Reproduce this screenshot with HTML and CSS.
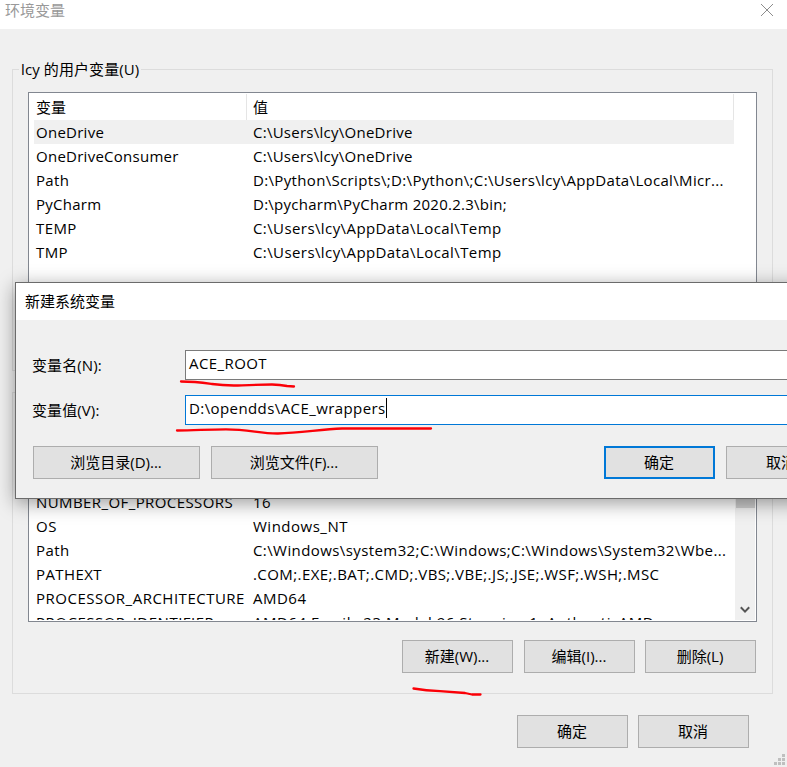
FILE: index.html
```
<!DOCTYPE html>
<html lang="zh-CN">
<head>
<meta charset="utf-8">
<title>环境变量</title>
<link rel="stylesheet" href="styles.css">
</head>
<body>
<main class="window">
  <header class="titlebar">
    <span class="titlebar-text">环境变量</span>
    <svg class="close" width="14" height="14" viewBox="0 0 14 14"><path d="M1 1L13 13M13 1L1 13" fill="none" stroke="#8c8c8c" stroke-width="1"/></svg>
  </header>

  <section class="group group-user">
    <h2 class="legend">lcy 的用户变量(U)</h2>
    <div class="list list-user">
      <div class="row head"><span class="name">变量</span><span class="value">值</span></div>
      <div class="row selected t2"><span class="name">OneDrive</span><span class="value">C:\Users\lcy\OneDrive</span></div>
      <div class="row t2"><span class="name">OneDriveConsumer</span><span class="value">C:\Users\lcy\OneDrive</span></div>
      <div class="row t3"><span class="name">Path</span><span class="value">D:\Python\Scripts\;D:\Python\;C:\Users\lcy\AppData\Local\Micr...</span></div>
      <div class="row t2"><span class="name">PyCharm</span><span class="value">D:\pycharm\PyCharm 2020.2.3\bin;</span></div>
      <div class="row t4"><span class="name">TEMP</span><span class="value">C:\Users\lcy\AppData\Local\Temp</span></div>
      <div class="row t4"><span class="name">TMP</span><span class="value">C:\Users\lcy\AppData\Local\Temp</span></div>
    </div>
  </section>

  <section class="group group-system">
    <div class="list list-system">
      <div class="rows">
        <div class="row t4"><span class="name">NUMBER_OF_PROCESSORS</span><span class="value">16</span></div>
        <div class="row t5"><span class="name">OS</span><span class="value">Windows_NT</span></div>
        <div class="row t4"><span class="name">Path</span><span class="value">C:\Windows\system32;C:\Windows;C:\Windows\System32\Wbe...</span></div>
        <div class="row t4"><span class="name">PATHEXT</span><span class="value">.COM;.EXE;.BAT;.CMD;.VBS;.VBE;.JS;.JSE;.WSF;.WSH;.MSC</span></div>
        <div class="row t5"><span class="name">PROCESSOR_ARCHITECTURE</span><span class="value">AMD64</span></div>
        <div class="row t5"><span class="name">PROCESSOR_IDENTIFIER</span><span class="value">AMD64 Family 23 Model 96 Stepping 1, AuthenticAMD</span></div>
      </div>
      <div class="scrollbar">
        <div class="thumb"></div>
        <svg class="chevron" width="10" height="8" viewBox="0 0 10 8"><path d="M0.8 1.2L5 5.6L9.2 1.2" fill="none" stroke="#555" stroke-width="2"/></svg>
      </div>
    </div>
    <div class="actions">
      <button class="btn">新建(W)...</button>
      <button class="btn">编辑(I)...</button>
      <button class="btn">删除(L)</button>
    </div>
  </section>

  <footer class="footer">
    <button class="btn">确定</button>
    <button class="btn">取消</button>
  </footer>
  <svg class="grip" width="12" height="12" viewBox="0 0 12 12" fill="#bfbfbf"><path d="M8 0h3v3h-3zM4 4h3v3h-3zM8 4h3v3h-3zM0 8h3v3h-3zM4 8h3v3h-3zM8 8h3v3h-3z"/></svg>

  <section class="dialog">
    <header class="dialog-title">新建系统变量</header>
    <div class="form">
      <label class="field"><span class="label">变量名(N):</span><span class="input">ACE_ROOT</span></label>
      <label class="field"><span class="label">变量值(V):</span><span class="input focused">D:\opendds\ACE_wrappers<i class="caret"></i></span></label>
      <div class="dialog-actions">
        <button class="btn wide">浏览目录(D)...</button>
        <button class="btn wide">浏览文件(F)...</button>
        <button class="btn primary">确定</button>
        <button class="btn">取消</button>
      </div>
    </div>
  </section>

  <svg class="marks" width="787" height="767" viewBox="0 0 787 767" fill="none" stroke="#fb0007" stroke-width="2.3" stroke-linecap="round" stroke-linejoin="round">
    <path d="M181 381.5C194 381.5 201 382.500 212 384Q226 386 242 385.300T272 384.500Q280 384.600 287 386L294 386.500"/>
    <path d="M177 430.500C195 430.500 207 429.300 226 429.300C249 429.300 260 433.700 278 433.500C300 433 320 429.500 342 428.500H431"/>
    <path d="M413.500 688.500Q426 690.500 440 691.200L465 693L472 694.500H480.500"/>
  </svg>
</main>
</body>
</html>
```
FILE: styles.css
```
* { box-sizing: border-box; }
body {
  margin: 0;
  overflow: hidden;
  background: #f0f0f0;
  color: #000;
  font: 15px/24px "Open Sans", "Noto Sans CJK SC", sans-serif;
}
.window {
  position: relative;
  width: 787px;
  height: 767px;
  overflow: hidden;
  background: #f0f0f0;
}
.titlebar {
  display: flex;
  justify-content: space-between;
  height: 29px;
  padding: 0 13px 0 5px;
  background: #fff;
  color: #999;
  line-height: 20px;
}
.close { margin-top: 3px; }
.group {
  width: 761px;
  margin-left: 12px;
  border: 1px solid #dcdcdc;
}
.group-user { height: 302px; margin-top: 40px; padding: 0 15px; }
.group-system { height: 302px; margin-top: 21px; padding: 22px 15px 0; }
.legend {
  width: max-content;
  height: 24px;
  margin: -12px 0 0 -9px;
  padding: 0 2px;
  background: #f0f0f0;
  font-size: 15px;
  font-weight: 400;
  line-height: 23px;
  letter-spacing: 0.1px;
}
.list {
  width: 729px;
  border: 1px solid #828790;
  background: #fff;
}
.list-user { height: 248px; margin-top: 10px; padding: 1px 5px; }
.list-system {
  display: flex;
  justify-content: space-between;
  height: 207px;
  padding: 1px 1px 1px 5px;
}
.rows {
  height: 203px;
  padding-top: 73px;
  overflow: hidden;
}
.row {
  display: flex;
  width: 700px;
  height: 24px;
  white-space: nowrap;
}
.rows .row { width: 695px; }
.name { flex: none; width: 213px; padding-left: 2px; }
.value { padding-left: 6px; }
.head { height: 26px; line-height: 26px; border-right: 1px solid #e5e5e5; }
.head .name { border-right: 1px solid #e5e5e5; }
.selected { background: #f0f0f0; }
.t2 { letter-spacing: 0.26px; }
.t3 { letter-spacing: 0.34px; }
.t4 { letter-spacing: 0.41px; }
.t5 { letter-spacing: 0.5px; }
.scrollbar {
  display: flex;
  flex-direction: column;
  align-items: center;
  justify-content: space-between;
  width: 20px;
  background: #f0f0f0;
}
.thumb { width: 19px; height: 71px; margin-top: 20px; background: #cdcdcd; }
.chevron { margin-bottom: 6px; }
.actions { display: flex; justify-content: flex-end; gap: 10px; margin: 18px 1px 0 0; }
.footer { display: flex; justify-content: flex-end; gap: 10px; padding: 21px 38px 0 0; }
.btn {
  flex: none;
  width: 111px;
  height: 33px;
  padding: 0 1px 2px 0;
  border: 1px solid #adadad;
  background: #e1e1e1;
  color: #000;
  font: inherit;
}
.actions .btn:nth-child(2) { margin-left: 1px; }
.wide { width: 167px; }
.primary { border: 2px solid #0078d7; margin-left: auto; }
.grip { position: absolute; right: 1px; bottom: 1px; }
.dialog {
  position: absolute;
  left: 15px;
  top: 282px;
  width: 840px;
  height: 217px;
  border: 1px solid #6b6b6b;
  background: #f0f0f0;
  box-shadow: 0 4px 18px rgba(0, 0, 0, 0.4);
}
.dialog-title {
  height: 37px;
  padding-left: 9px;
  background: #fff;
  line-height: 37px;
}
.form { padding: 30px 17px 0; }
.field { display: flex; height: 30px; margin-bottom: 15px; }
.label { width: 152px; margin-left: -1px; line-height: 31px; letter-spacing: 0.1px; }
.input {
  display: flex;
  flex: 1;
  margin-left: 1px;
  padding-left: 3px;
  border: 1px solid #7a7a7a;
  background: #fff;
  line-height: 25px;
  letter-spacing: 0.41px;
}
.focused { border-color: #0078d7; }
.caret { width: 1px; height: 20px; margin-top: 2px; background: #000; }
.dialog-actions { display: flex; gap: 11px; margin-top: 21px; }
.marks { position: absolute; left: 0; top: 0; }
```
